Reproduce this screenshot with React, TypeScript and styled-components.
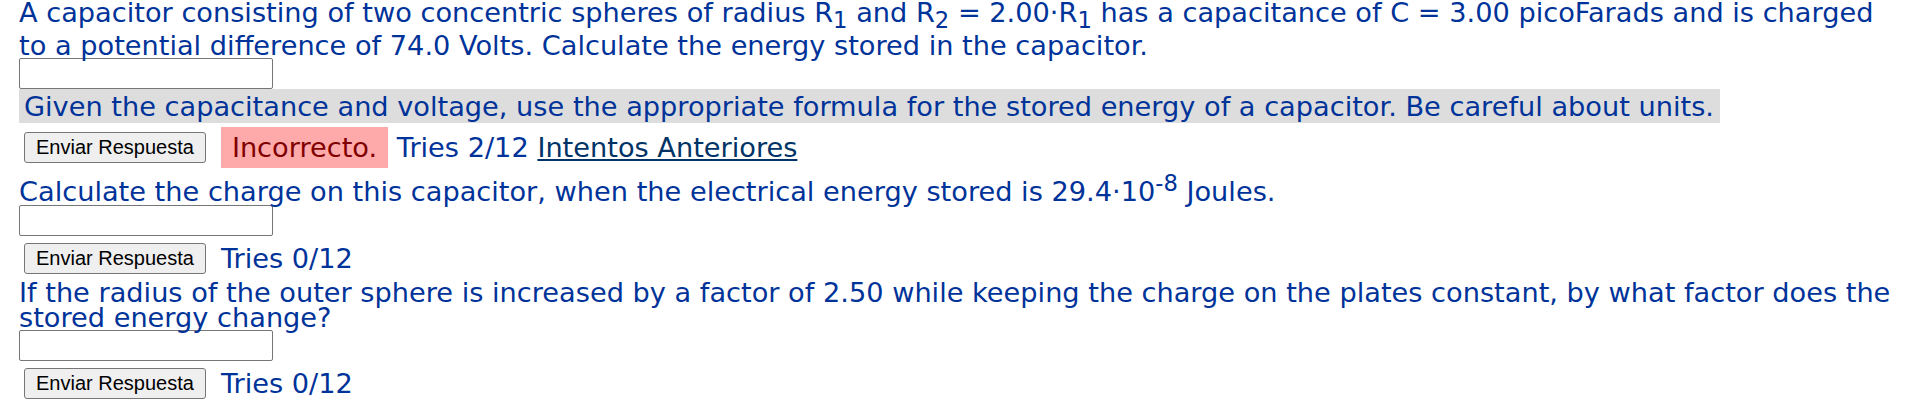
import React from "react";
import styled, { createGlobalStyle } from "styled-components";

const GlobalStyle = createGlobalStyle`
    body {
        margin: 0;
        background: #ffffff;
    }
`;

const Page = styled.div`
    padding: 0 0 0 19px;
    font-family: "DejaVu Sans", Verdana, sans-serif;
    font-size: 27.2px;
    line-height: 25px;
    color: #003399;
`;

const Question = styled.section``;

const Prompt = styled.div`
    white-space: nowrap;

    sub,
    sup {
        font-size: smaller;
        line-height: 25px;
    }
`;

const AnswerInput = styled.input`
    display: block;
    box-sizing: border-box;
    width: 254px;
    height: 31px;
    margin: 0;
    padding: 0 4px;
    border: 1px solid #767676;
    border-radius: 2px;
    background: #ffffff;
`;

const Hint = styled.div`
    width: fit-content;
    padding: 5px 6px 4px 5px;
    background: #dddddd;
    white-space: nowrap;
`;

const SubmitRow = styled.div`
    display: flex;
    align-items: center;
    gap: 15px;
    padding: 4px 0 3px;
`;

const SubmitButton = styled.button`
    box-sizing: border-box;
    height: 31px;
    margin: 3px 0 3px 5px;
    padding: 0 11px;
    font-family: "Liberation Sans", Arial, sans-serif;
    font-size: 20px;
    color: #000000;
    background: #efefef;
    border: 1px solid #767676;
    border-radius: 3px;
`;

const Status = styled.span`
    white-space: nowrap;
`;

const Verdict = styled.span`
    display: inline-block;
    padding: 8px 11px;
    background: #ffaaaa;
    color: #800000;
`;

const PrevLink = styled.a`
    color: #003366;
    text-decoration: underline;
    cursor: pointer;
`;

interface IRowProps {
    verdict?: string,
    tries: string,
    history?: boolean
}

function Submit({ verdict, tries, history }: IRowProps) {
    return (
        <SubmitRow>
            <SubmitButton type="button">Enviar Respuesta</SubmitButton>
            <Status>
                {verdict && <><Verdict>{verdict}</Verdict> </>}
                Tries {tries}
                {history && <> <PrevLink>Intentos Anteriores</PrevLink></>}
            </Status>
        </SubmitRow>
    );
}

function App() {
    return (
        <Page>
            <GlobalStyle />
            <Question>
                <Prompt>
                    A capacitor consisting of two concentric spheres of radius R<sub>1</sub> and R<sub>2</sub> = 2.00·R<sub>1</sub> has a capacitance of C = 3.00 picoFarads and is charged<br />
                    to a potential difference of 74.0 Volts. Calculate the energy stored in the capacitor.
                </Prompt>
                <AnswerInput type="text" />
                <Hint>Given the capacitance and voltage, use the appropriate formula for the stored energy of a capacitor. Be careful about units.</Hint>
                <Submit verdict="Incorrecto." tries="2/12" history />
            </Question>
            <Question>
                <Prompt>
                    Calculate the charge on this capacitor, when the electrical energy stored is 29.4·10<sup>-8</sup> Joules.
                </Prompt>
                <AnswerInput type="text" />
                <Submit tries="0/12" />
            </Question>
            <Question>
                <Prompt>
                    If the radius of the outer sphere is increased by a factor of 2.50 while keeping the charge on the plates constant, by what factor does the<br />
                    stored energy change?
                </Prompt>
                <AnswerInput type="text" />
                <Submit tries="0/12" />
            </Question>
        </Page>
    );
}

export default App;
